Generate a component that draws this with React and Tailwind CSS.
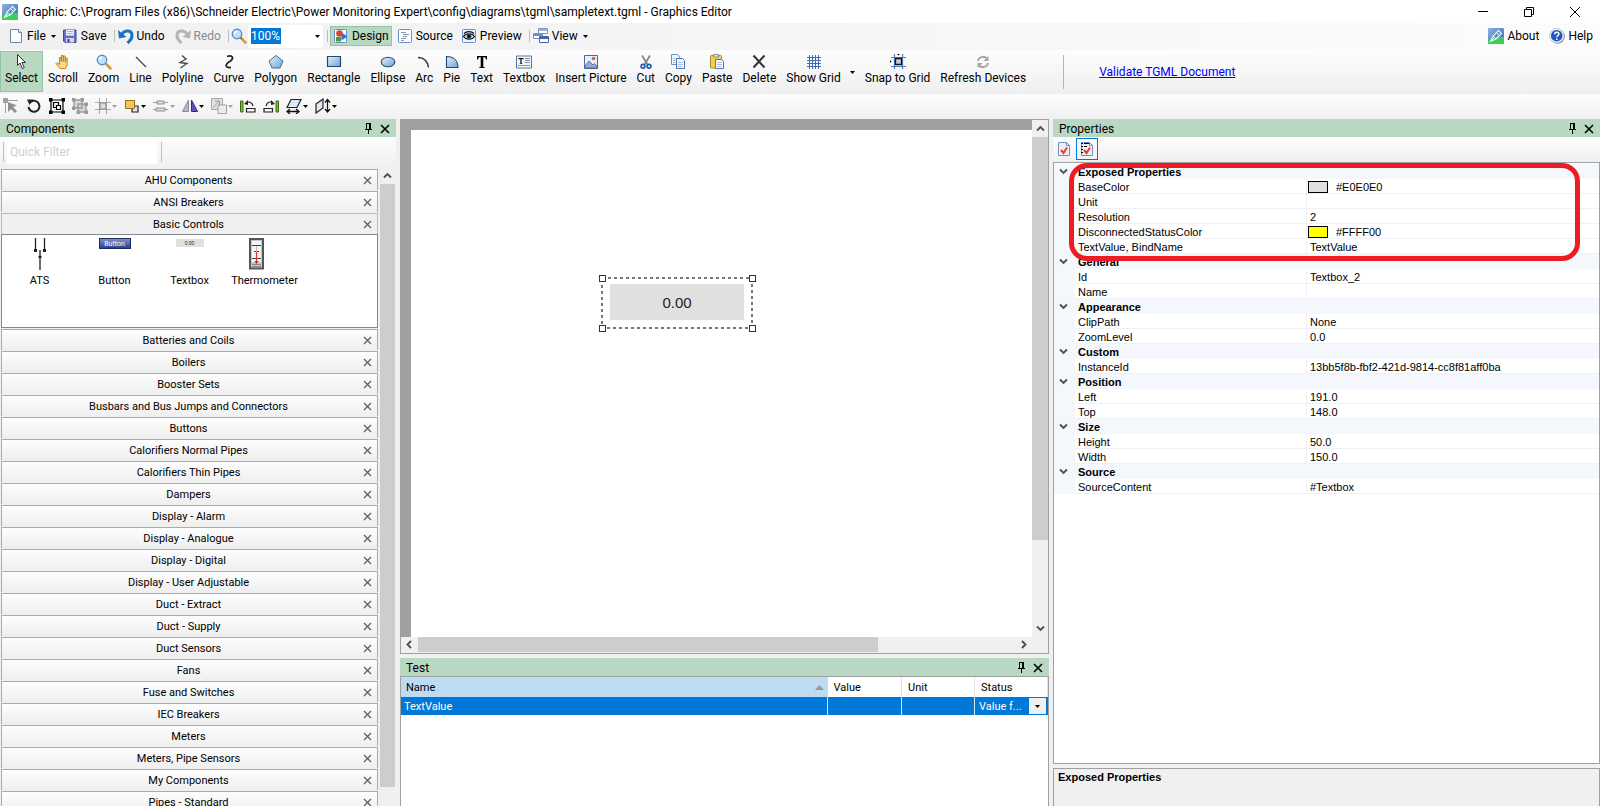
import React from 'react';

const Svg = ({ children, size = 16, className = '' }) => (
  <svg width={size} height={size} viewBox={`0 0 ${size} ${size}`} className={`shrink-0 ${className}`} fill="none" aria-hidden="true">
    {children}
  </svg>
);

// Small black drop-down triangle
const Caret = ({ className = 'text-black' }) => (
  <svg width="5" height="3" viewBox="0 0 5 3" className={`shrink-0 ${className}`} aria-hidden="true">
    <path d="M0 0h5L2.5 3z" fill="currentColor" />
  </svg>
);

const AppLogo = () => (
  <Svg>
    <defs>
      <linearGradient id="logoBlue" x1="0" y1="0" x2="1" y2="1">
        <stop offset="0" stopColor="#8fb0de" />
        <stop offset="1" stopColor="#2d6fb8" />
      </linearGradient>
    </defs>
    <rect width="16" height="16" rx="1" fill="url(#logoBlue)" />
    <path d="M0 12 6 9h10v6a1 1 0 0 1-1 1H1a1 1 0 0 1-1-1z" fill="#3dcd58" />
    <path d="M2.500 13.500 5 8l5.500-5.500 3 3L8 11z" stroke="#e8f4ff" strokeWidth="1.100" />
    <path d="M5 8l3 3M2.500 13.500 6.500 9.500M8.500 4.500l3 3" stroke="#e8f4ff" />
  </Svg>
);

const NewFile = () => (
  <Svg>
    <path d="M2.500 1.500h8l3 3v10h-11z" fill="#fbfdff" stroke="#6d86ad" />
    <path d="M10.500 1.500v3h3" fill="#dce8f8" stroke="#6d86ad" />
  </Svg>
);

const SaveIcon = () => (
  <Svg>
    <path d="M1.500 2h12.500v12.500H3L1.500 13z" fill="#6a6ec8" stroke="#45489c" />
    <path d="M4 2h8v5.500H4z" fill="#f2f4ff" />
    <path d="M5 3.500h6M5 5.500h6" stroke="#a7abcf" />
    <path d="M4 10h8v4.500H4z" fill="#d3d6e6" />
    <path d="M5.500 11h2v3.500h-2z" fill="#35388a" />
  </Svg>
);

const UndoIcon = () => (
  <Svg>
    <path d="M4 6c3-4.500 10-4 10 1.500 0 4-2.500 5.500-4.500 7.500" stroke="#1f6fc4" strokeWidth="3" />
    <path d="M0 2l1 8.500L8.500 9z" fill="#1f6fc4" />
  </Svg>
);

const RedoIcon = () => (
  <Svg>
    <path d="M12 6C9 1.500 2 2 2 7.500c0 4 2.500 5.500 4.500 7.500" stroke="#b4b4b4" strokeWidth="3" />
    <path d="M16 2l-1 8.500L7.500 9z" fill="#b4b4b4" />
  </Svg>
);

const Magnifier = () => (
  <Svg>
    <path d="M9.500 9.500l5 5" stroke="#d59a3c" strokeWidth="2.500" strokeLinecap="round" />
    <path d="M9 9l2 2" stroke="#6b6b6b" strokeWidth="1.500" />
    <circle cx="6" cy="6" r="4.700" fill="#bfe0fa" stroke="#5b8fc9" strokeWidth="1.400" />
    <path d="M3.500 6a2.500 2.500 0 0 1 2.500-2.500" stroke="#fff" strokeWidth="1.300" />
  </Svg>
);

const DesignIcon = () => (
  <Svg>
    <rect x="1.500" y="1.500" width="12" height="13" rx="1" fill="#f4f8ff" stroke="#6f8fc4" />
    <circle cx="6.500" cy="5.500" r="3.300" fill="#e2432c" />
    <path d="M3 9h5v4.500H3z" fill="#35a13f" />
    <path d="M8.500 4.500l6 4-6 4z" fill="#2f77d6" />
  </Svg>
);

const SourceIcon = () => (
  <Svg>
    <rect x="1.500" y="1.500" width="13" height="13" rx="1" fill="#fbfdff" stroke="#6f8fc4" />
    <path d="M4 4.500h5M6 6.500h6M6 8.500h4M4 10.500h5M4 12.500h3" stroke="#8796ad" />
  </Svg>
);

const PreviewIcon = () => (
  <Svg>
    <rect x="1.500" y="1.500" width="13" height="13" rx="1" fill="#eef4fc" stroke="#6f8fc4" />
    <path d="M2.500 8.500C5 5 11 5 13.500 8.500 11 12 5 12 2.500 8.500z" fill="#fff" stroke="#111" strokeWidth="1.200" />
    <circle cx="8" cy="8.300" r="2.500" fill="#24507f" />
    <circle cx="8" cy="8.300" r="1.200" fill="#000" />
    <path d="M3 5.500C5.500 3 10.500 3 13 5.500" stroke="#111" strokeWidth="1.200" />
  </Svg>
);

const ViewIcon = () => (
  <Svg>
    <path d="M5.500.5h9v5h-9z" fill="#fff" stroke="#7f93b8" />
    <path d="M5.500 1h9v2h-9z" fill="#9db3d8" />
    <path d="M.5 5.500h9v5h-9z" fill="#fff" stroke="#7f93b8" />
    <path d="M.5 6h9v2h-9z" fill="#6d8fcb" />
    <path d="M6.500 8.500h9v6h-9z" fill="#fff" stroke="#4a66a0" />
    <path d="M6.500 9h9v2h-9z" fill="#3d66b4" />
  </Svg>
);

const HelpIcon = () => (
  <Svg>
    <circle cx="8.500" cy="8.500" r="7.300" fill="#8b8f98" />
    <circle cx="7.700" cy="7.700" r="7.200" fill="#f3f6fb" stroke="#b6bccb" strokeWidth=".8" />
    <circle cx="7.700" cy="7.700" r="5.800" fill="#2458c5" />
    <path d="M5.700 6.200c0-2.800 4.200-2.600 4.200-.2 0 1.500-2.100 1.600-2.100 3.300M7.800 10.500v1.500" stroke="#fff" strokeWidth="1.500" />
  </Svg>
);

const tools = [
  { label: 'Select', active: true, icon: <path d="M4.500.5v11l2.500-2.500 2.300 5.500 2-.9L9 8.500h3.500z" fill="#fff" stroke="#333" /> },
  { label: 'Scroll', icon: <path d="M5 14.500 1 9.500 2 8.500l2.500 2V3.500h1.500v4h.5V1.500h1.700v6h.4v-5.500h1.600v6h.5V4h1.500v7L10.500 14.500z" fill="#fbd98b" stroke="#b57c1c" strokeWidth=".9" /> },
  { label: 'Zoom', icon: (
    <>
      <path d="M9.500 9.500l5 5" stroke="#d59a3c" strokeWidth="2.500" strokeLinecap="round" />
      <circle cx="6" cy="6" r="4.700" fill="#bfe0fa" stroke="#5b8fc9" strokeWidth="1.400" />
      <path d="M3.500 6a2.500 2.500 0 0 1 2.500-2.500" stroke="#fff" strokeWidth="1.300" />
    </>
  ) },
  { label: 'Line', icon: <path d="M3 3l10 10" stroke="#444" strokeWidth="1.300" /> },
  { label: 'Polyline', icon: <path d="M7 1.500 11 5 5 8.500l7 1L5.500 14" stroke="#444" strokeWidth="1.300" /> },
  { label: 'Curve', icon: <path d="M6 2.500c6-2 7 2 3.500 4.500-6 3.500-5.500 7 .5 6.500" stroke="#222" strokeWidth="1.800" /> },
  { label: 'Polygon', icon: <path d="M8 1.500 15 7l-3 7H4L1 7z" fill="url(#shapeBlue)" stroke="#3f6a9c" /> },
  { label: 'Rectangle', icon: <path d="M1.500 2.500h13v10h-13z" fill="url(#shapeBlue)" stroke="#27476d" strokeWidth="1.200" /> },
  { label: 'Ellipse', icon: <ellipse cx="8" cy="8" rx="6.800" ry="4.800" fill="url(#shapeBlue)" stroke="#27476d" strokeWidth="1.100" /> },
  { label: 'Arc', icon: <path d="M2 3.500c6 0 9.500 3.500 10.500 10" stroke="#333" strokeWidth="1.500" /> },
  { label: 'Pie', icon: <path d="M2.500 2.500C10 2.500 14 7 14 13.500H2.500z" fill="url(#shapeBlue)" stroke="#27476d" strokeWidth="1.100" /> },
  { label: 'Text', icon: <path d="M3 5.500V2h10v3.500h-1l-.7-2.200H9.300V13l1.700.4v.6H5v-.6l1.700-.4V3.300h-2L4 5.500z" fill="#000" /> },
  { label: 'Textbox', icon: (
    <>
      <path d="M.5 2h15v12H.5z" fill="#f7faff" stroke="#56749f" />
      <path d="M2.500 4h5v1.500h-.7V5H5.600v4h.7v.8H3.700V9h.7V5H3.200v.5h-.7z" fill="#000" />
      <path d="M9 4.500h5M9 6.500h5M9 8.500h5M2 11.500h12" stroke="#7f8fa8" />
    </>
  ) },
  { label: 'Insert Picture', icon: (
    <>
      <path d="M1.500 1.500h13v13h-13z" fill="#e6f0fc" stroke="#4b6797" />
      <circle cx="10.500" cy="4.500" r="1.800" fill="#e2622c" />
      <path d="M2 12l4-5 4 4 1.500-1.500L14 12v2H2z" fill="#93abd2" stroke="#4b5f8c" strokeWidth=".8" />
    </>
  ) },
  { label: 'Cut', icon: (
    <>
      <path d="M4 1.500l5.500 9M12 1.500 6.500 10.500" stroke="#7f8690" strokeWidth="1.700" />
      <circle cx="5" cy="12.300" r="1.900" stroke="#1d5fb5" strokeWidth="1.700" />
      <circle cx="11" cy="12.300" r="1.900" stroke="#1d5fb5" strokeWidth="1.700" />
    </>
  ) },
  { label: 'Copy', icon: (
    <>
      <path d="M1.500.5h6l2 2v8h-8z" fill="#eef5fe" stroke="#6b8dc6" />
      <path d="M6.500 4.500h6l2 2v8h-8z" fill="#f5f9ff" stroke="#4f77b8" />
      <path d="M3 4.500h2.500M3 6.500h2.500M3 8.500h2.500M8 8.500h5M8 10.500h5M8 12.500h4" stroke="#a7c3ea" />
    </>
  ) },
  { label: 'Paste', icon: (
    <>
      <rect x="1.500" y="1.500" width="11" height="12.500" rx="1" fill="#f3cf56" stroke="#a98a2a" />
      <path d="M4.500.5h5v2.500h-5z" fill="#d9dde4" stroke="#7b808a" strokeWidth=".8" />
      <path d="M6.500 5.500h6l2 2v7h-8z" fill="#f5f9ff" stroke="#4f77b8" />
      <path d="M8 8.500h5M8 10.500h5M8 12.500h4" stroke="#a7c3ea" />
    </>
  ) },
  { label: 'Delete', icon: <path d="M2.500 1.500l11 12M13.500 1.500l-11 12" stroke="#333" strokeWidth="2" /> },
  { label: 'Show Grid', caret: true, icon: <path d="M3.500 1v14M6.500 1v14M9.500 1v14M12.500 1v14M1 3.500h14M1 6.500h14M1 9.500h14M1 12.500h14" stroke="#3a6bb5" /> },
  { label: 'Snap to Grid', icon: (
    <>
      <path d="M4.500 0v15M12.500 0v15M1 3.500h15M1 12.500h15" stroke="#4b7cc4" strokeWidth="1.200" />
      <path d="M5.500 4.500h6v6h-6z" fill="#c5cbd6" stroke="#111" strokeWidth="1.300" />
      <path d="M0 6v3l1.500-1.500zM7 0h3L8.500 1.500z" fill="#111" />
    </>
  ) },
  { label: 'Refresh Devices', icon: (
    <>
      <path d="M3 7c.5-4 6-5.500 9-2.500M13 9c-.5 4-6 5.500-9 2.500" stroke="#a5a5a5" strokeWidth="2" />
      <path d="M13.500 2v5h-5zM2.500 14V9h5z" fill="#a5a5a5" />
    </>
  ) },
];

const arrangeTools = [
  { name: 'Edit points', icon: (
    <>
      <path d="M2.500 2v13M2 2.500h13" stroke="#a0a0a0" />
      <path d="M0 0h5v5H0z" fill="#a0a0a0" />
      <path d="M5 4v10l3-3 4 4 2-2-4-4 4-1.500z" fill="#8f8f8f" />
    </>
  ) },
  { name: 'Rotate', icon: (
    <>
      <path d="M4.500 4A5.500 5.500 0 1 1 2.500 9" stroke="#222" strokeWidth="2" />
      <path d="M1 1.500h6.500L3.500 7z" fill="#222" />
    </>
  ) },
  { name: 'Group', icon: (
    <>
      <path d="M2 2h12v12H2z" stroke="#000" strokeWidth="1.200" />
      <path d="M4.500 4.500h5v5h-5z" fill="#eef1f6" stroke="#000" strokeWidth="1.200" />
      <path d="M7.500 7.500h4v4h-4z" fill="#fff" stroke="#000" strokeWidth="1.200" />
      <path d="M0 0h3.500v3.500H0zM12.500 0H16v3.500h-3.500zM0 12.500h3.500V16H0zM12.500 12.500H16V16h-3.500z" fill="#000" />
    </>
  ) },
  { name: 'Ungroup', icon: (
    <>
      <path d="M2 2h8v8H2zM6 6h8v8H6z" fill="#d8d8d8" stroke="#9a9a9a" strokeWidth="1.400" />
      <path d="M0 0h3.500v3.500H0zM8.500 0H12v3.500H8.500zM0 8.500h3.500V12H0zM12.500 4.500H16V8h-3.500zM4.500 12.500H8V16H4.500zM12.500 12.500H16V16h-3.500z" fill="#9a9a9a" />
    </>
  ) },
  { name: 'Align', caret: 'off', icon: (
    <>
      <path d="M4.500 0v16M11.500 0v16M0 4.500h16M0 11.500h16" stroke="#a8a8a8" />
      <path d="M5 5h6v6H5z" fill="#ddd" stroke="#8d8d8d" strokeWidth="1.200" />
    </>
  ) },
  { name: 'Order', caret: 'on', icon: (
    <>
      <path d="M8 8h6v6H8z" fill="#dce9f8" stroke="#222" strokeWidth="1.200" />
      <path d="M1.500 2.500h9v8h-9z" fill="#f4c55c" stroke="#9a6f14" />
    </>
  ) },
  { name: 'Distribute', caret: 'off', icon: (
    <>
      <path d="M0 4.500h15M0 11.500h15" stroke="#a0a0a0" />
      <path d="M4 3h7v3H4zM3 10h9v3H3z" fill="#ddd" stroke="#8d8d8d" />
    </>
  ) },
  { name: 'Flip', caret: 'on', icon: (
    <>
      <path d="M6.500 2v11.500H.5z" fill="#b9b4c8" stroke="#8f8aa3" />
      <path d="M9.500 2v11.500h6z" fill="#6a4fb5" stroke="#3b2a75" />
    </>
  ) },
  { name: 'Combine', caret: 'off', icon: (
    <>
      <path d="M.5.500h11v11H.5z" fill="#e2e2e2" stroke="#a8a8a8" />
      <path d="M7 7h8.500v8.500H7z" fill="#ececec" stroke="#a0a0a0" />
      <path d="M2 10 8 3M4 3h4.500v4" stroke="#9a9a9a" />
    </>
  ) },
  { name: 'Rotate left', icon: (
    <>
      <path d="M.5 3h2.500v11H.5z" fill="#79b83a" stroke="#3d6b14" />
      <path d="M6.500 10.500h8.500v3.500H6.500zM6 5c3-2 6-1 7 3" stroke="#222" strokeWidth="1.200" />
      <path d="M4 6l4-4v5z" fill="#222" />
    </>
  ) },
  { name: 'Rotate right', icon: (
    <>
      <path d="M13 3h2.500v11H13z" fill="#79b83a" stroke="#3d6b14" />
      <path d="M1 10.500h8.500v3.500H1zM10 5C7 3 4 4 3 8" stroke="#222" strokeWidth="1.200" />
      <path d="M12 6 8 2v5z" fill="#222" />
    </>
  ) },
  { name: 'Skew horizontally', caret: 'on', icon: (
    <>
      <path d="M5 1.500h10l-4 8H1z" fill="#dce9f8" stroke="#222" strokeWidth="1.200" />
      <path d="M2 13.500h10M4 11l-3 2.500L4 16M10 11l3 2.500L10 16" stroke="#111" strokeWidth="1.300" />
    </>
  ) },
  { name: 'Skew vertically', caret: 'on', icon: (
    <>
      <path d="M1 6l7-5v9l-7 5z" fill="#dce9f8" stroke="#222" strokeWidth="1.200" />
      <path d="M12.500 2v11M10 4.500 12.500 1.500l2.500 3M10 11l2.500 3 2.500-3" stroke="#111" strokeWidth="1.300" />
    </>
  ) },
];

const categoriesAbove = ['AHU Components', 'ANSI Breakers'];

const categoriesBelow = [
  'Batteries and Coils',
  'Boilers',
  'Booster Sets',
  'Busbars and Bus Jumps and Connectors',
  'Buttons',
  'Calorifiers Normal Pipes',
  'Calorifiers Thin Pipes',
  'Dampers',
  'Display - Alarm',
  'Display - Analogue',
  'Display - Digital',
  'Display - User Adjustable',
  'Duct - Extract',
  'Duct - Supply',
  'Duct Sensors',
  'Fans',
  'Fuse and Switches',
  'IEC Breakers',
  'Meters',
  'Meters, Pipe Sensors',
  'My Components',
  'Pipes - Standard',
];

const propertyGroups = [
  { name: 'Exposed Properties', rows: [
    ['BaseColor', '#E0E0E0', 'bg-[#e0e0e0]'],
    ['Unit', ''],
    ['Resolution', '2'],
    ['DisconnectedStatusColor', '#FFFF00', 'bg-[#ffff00]'],
    ['TextValue, BindName', 'TextValue'],
  ] },
  { name: 'General', rows: [['Id', 'Textbox_2'], ['Name', '']] },
  { name: 'Appearance', rows: [['ClipPath', 'None'], ['ZoomLevel', '0.0']] },
  { name: 'Custom', rows: [['InstanceId', '13bb5f8b-fbf2-421d-9814-cc8f81aff0ba']] },
  { name: 'Position', rows: [['Left', '191.0'], ['Top', '148.0']] },
  { name: 'Size', rows: [['Height', '50.0'], ['Width', '150.0']] },
  { name: 'Source', rows: [['SourceContent', '#Textbox']] },
];

const Separator = () => <div className="h-3 w-px shrink-0 bg-[#bdbdbd]" />;

const MenuButton = ({ icon, label, caret, active, disabled }) => (
  <button
    disabled={disabled}
    className={`flex h-5 shrink-0 items-center gap-[3px] border px-[2px] ${active ? 'border-[#8fc5a4] bg-[#b9d8c2]' : 'border-transparent'} ${disabled ? 'text-[#8a8a8a]' : ''}`}
  >
    {icon}
    <span>{label}</span>
    {caret && <Caret className="ml-[2px] text-black" />}
  </button>
);

const PanelHeader = ({ title }) => (
  <div className="flex h-[18px] shrink-0 items-center bg-[#b9d8c2] px-[6px] pt-px">
    <h2 className="flex-1">{title}</h2>
    <button aria-label={`Pin ${title}`} className="mr-[7px]">
      <svg width="9" height="11" viewBox="0 0 9 11" shapeRendering="crispEdges" aria-hidden="true">
        <path d="M2 0h5v1H2zM2 0h1v6H2zM5 0h2v6H5zM1 6h7v1H1zM4 7h1v4H4z" fill="#000" />
      </svg>
    </button>
    <button aria-label={`Close ${title}`}>
      <svg width="10" height="10" viewBox="0 0 10 10" aria-hidden="true">
        <path d="M1 1l8 8M9 1l-8 8" stroke="#000" strokeWidth="1.600" />
      </svg>
    </button>
  </div>
);

const CategoryHeader = ({ name, open }) => (
  <div className="h-[22px]">
    <div className={`flex h-[21px] items-center border border-b-0 pr-[5px] ${open ? 'border-[#b8b8b8] bg-[#f0f0f0]' : 'border-[#7eb6e4] bg-linear-to-b from-[#fdfdfd] to-[#efefef]'}`}>
      <button className="flex-1 pl-3 pt-px text-center">{name}</button>
      <button aria-label={`Remove ${name}`}>
        <svg width="9" height="9" viewBox="0 0 9 9" aria-hidden="true">
          <path d="M1 1l7 7M8 1L1 8" stroke="#606060" strokeWidth="1.300" />
        </svg>
      </button>
    </div>
  </div>
);

const Chevron = ({ dir }) => {
  const paths = {
    up: 'M1 6.500 4.500 3 8 6.500',
    down: 'M1 2.500 4.500 6 8 2.500',
    left: 'M6 1 2.500 4.500 6 8',
    right: 'M3 1l3.500 3.500L3 8',
  };
  return (
    <svg width="9" height="9" viewBox="0 0 9 9" fill="none" aria-hidden="true">
      <path d={paths[dir]} stroke="#505050" strokeWidth="1.900" />
    </svg>
  );
};

const CheckPage = ({ list }) => (
  <Svg>
    <path d="M2.500 1.500h8l3 3v10h-11z" fill="#e9effb" stroke="#7390c0" />
    <path d="M10.500 1.500v3h3" stroke="#7390c0" />
    <path d="M5 9l2.500 3L11 6.500" stroke="#e8401c" strokeWidth="2" />
    {list && <path d="M2 2.500h2M5 2.500h5M2 5.500h2M5 5.500h3M2 8.500h2M2 11.500h2" stroke="#000" strokeWidth="1.200" />}
  </Svg>
);

const ComponentItem = ({ label, children }) => (
  <button className="flex w-[75px] flex-col items-center">
    <span className="flex h-8 items-start">{children}</span>
    <span className="mt-[3px] leading-4">{label}</span>
  </button>
);

const ComponentsPanel = () => (
  <aside className="flex w-[396px] shrink-0 flex-col overflow-hidden">
    <PanelHeader title="Components" />
    <div className="flex h-[30px] shrink-0 items-center bg-linear-to-b from-[#fdfdfd] to-[#f0f0f0] pl-[3px]">
      <div className="mr-[3px] h-5 w-px bg-[#bdbdbd]" />
      <input aria-label="Quick Filter" placeholder="Quick Filter" className="h-6 w-[150px] bg-white px-[3px] outline-none placeholder:text-[#cfcfcf]" />
      <div className="ml-1 h-5 w-px bg-[#bdbdbd]" />
    </div>
    <div className="flex min-h-0 flex-1">
      <div className="flex-1 overflow-hidden pl-px pt-[2px] text-[11px]">
        {categoriesAbove.map((name) => <CategoryHeader key={name} name={name} />)}
        <CategoryHeader name="Basic Controls" open />
        <div className="-mt-px mb-px flex h-[94px] items-start border border-[#828790] bg-white pt-[3px]">
          <ComponentItem label="ATS">
            <svg width="14" height="32" viewBox="0 0 14 32" fill="none" aria-hidden="true">
              <path d="M2.500 0v13M11.500 0v13M7 12v20" stroke="#222" strokeWidth="1.300" />
              <path d="M1 11h3v3H1zM10 11h3v3h-3zM5.500 18h3v2h-3z" fill="#222" />
            </svg>
          </ComponentItem>
          <ComponentItem label="Button">
            <span className="flex h-[11px] w-8 items-center justify-center border border-[#1c2a5c] bg-linear-to-b from-[#7d90c8] to-[#2a4194] text-[7px] text-white">Button</span>
          </ComponentItem>
          <ComponentItem label="Textbox">
            <span className="mt-px flex h-2 w-7 items-center justify-center bg-[#e0e0e0] text-[5px] text-[#333]">0.00</span>
          </ComponentItem>
          <ComponentItem label="Thermometer">
            <svg width="16" height="32" viewBox="0 0 16 32" fill="none" className="mr-4" aria-hidden="true">
              <path d="M1 1h13v29.500H1z" fill="#c8c8c8" stroke="#555" strokeWidth="2" />
              <path d="M3 3h9v21H3z" fill="#f4f4f4" />
              <path d="M3 7.500h9M5 13.500h5M3 20.500h9" stroke="#444" />
              <path d="M7.500 8v6" stroke="#bbb" />
              <path d="M7.500 14v10" stroke="#e03030" strokeWidth="1.200" />
              <path d="M5.500 23h4l-2 3z" fill="#d02020" />
              <path d="M3 26.500h9M3 28.500h9" stroke="#888" />
            </svg>
          </ComponentItem>
        </div>
        {categoriesBelow.map((name) => <CategoryHeader key={name} name={name} />)}
      </div>
      <div className="ml-[2px] mr-px flex w-[15px] flex-col">
        <button aria-label="Scroll up" className="flex h-[17px] items-center justify-center"><Chevron dir="up" /></button>
        <div className="mb-[19px] flex-1 bg-[#cdcdcd]" />
      </div>
    </div>
  </aside>
);

const Handle = ({ className }) => (
  <span className={`absolute size-[7px] border border-[#333] bg-white ${className}`} />
);

const CanvasPanel = () => (
  <section className="flex min-h-0 flex-1 flex-col border border-[#a0a0a0] bg-[#f0f0f0]">
    <div className="flex min-h-0 flex-1">
      <div className="flex flex-1 bg-[#a0a0a0] pl-[10px] pt-[10px]">
        <div className="relative flex-1 bg-white">
          {/* Selected textbox with its resize handles */}
          <div className="absolute left-[191px] top-[148px] h-[50px] w-[150px] px-2 pb-2 pt-[6px]">
            <svg className="absolute inset-0 size-full overflow-visible" fill="none" aria-hidden="true">
              <rect width="150" height="50" stroke="#777" strokeWidth="2" strokeDasharray="3 3" />
            </svg>
            <div className="flex h-full items-center justify-center bg-[#e0e0e0] pt-[2px] font-['Liberation_Sans',sans-serif] text-[15px] text-[#222]">0.00</div>
            <Handle className="-left-[3px] -top-[3px]" />
            <Handle className="-right-[4px] -top-[3px]" />
            <Handle className="-bottom-[4px] -left-[3px]" />
            <Handle className="-bottom-[4px] -right-[4px]" />
          </div>
        </div>
      </div>
      <div className="flex w-4 flex-col">
        <button aria-label="Scroll up" className="flex h-[17px] items-center justify-center"><Chevron dir="up" /></button>
        <div className="flex flex-1 flex-col">
          <div className="flex-5 bg-[#cdcdcd]" />
          <div className="flex-1" />
        </div>
        <button aria-label="Scroll down" className="flex h-[17px] items-center justify-center"><Chevron dir="down" /></button>
      </div>
    </div>
    <div className="flex h-4 pb-px pr-4">
      <button aria-label="Scroll left" className="flex w-[17px] items-center justify-center"><Chevron dir="left" /></button>
      <div className="flex flex-1">
        <div className="w-[77%] bg-[#cdcdcd]" />
      </div>
      <button aria-label="Scroll right" className="flex w-[17px] items-center justify-center"><Chevron dir="right" /></button>
    </div>
  </section>
);

const TestPanel = () => (
  <section className="flex h-[148px] shrink-0 flex-col">
    <PanelHeader title="Test" />
    <div className="flex-1 border border-b-0 border-[#a0a0a0] bg-white">
      <table className="w-full table-fixed border-collapse text-left text-[11px]">
        <colgroup>
          <col />
          <col className="w-[74px]" />
          <col className="w-[73px]" />
          <col className="w-[73px]" />
        </colgroup>
        <thead>
          <tr className="h-5">
            <th className="bg-[#bcdcf4] p-0 pl-[5px] pr-1 pt-px font-normal">
              <span className="flex items-center justify-between">
                Name
                <svg width="9" height="5" viewBox="0 0 9 5" aria-hidden="true"><path d="M4.500 0 9 5H0z" fill="#9a9a9a" /></svg>
              </span>
            </th>
            <th className="border-r border-[#e2e2e2] p-0 pl-[6px] pt-px font-normal">Value</th>
            <th className="border-r border-[#e2e2e2] p-0 pl-[6px] pt-px font-normal">Unit</th>
            <th className="border-r border-[#e2e2e2] p-0 pl-[6px] pt-px font-normal">Status</th>
          </tr>
        </thead>
        <tbody>
          <tr className="h-[18px] bg-[#0078d7] text-white">
            <td className="border-r border-[#d8e6f2] p-0 pl-[3px] pt-px">TextValue</td>
            <td className="border-r border-[#d8e6f2] p-0" />
            <td className="border-r border-[#d8e6f2] p-0" />
            <td className="relative p-0">
              <select aria-label="Status" className="block h-[18px] w-full appearance-none bg-transparent pl-1 pt-px outline-none">
                <option>Value f...</option>
              </select>
              <span className="pointer-events-none absolute right-[2px] top-px flex h-4 w-[17px] items-center justify-center bg-[#f0f0f0]"><Caret /></span>
            </td>
          </tr>
        </tbody>
      </table>
    </div>
  </section>
);

const PropertiesPanel = () => (
  <aside className="flex w-[547px] shrink-0 flex-col">
    <PanelHeader title="Properties" />
    <div className="flex h-[25px] shrink-0 items-start gap-px bg-linear-to-b from-[#fdfdfd] to-[#f0f0f0] pt-px">
      <button aria-label="Show all properties" className="flex h-[22px] w-[22px] items-center justify-center"><CheckPage /></button>
      <button aria-label="Show exposed properties" className="flex h-[22px] w-[22px] items-center justify-center border border-[#0078d7]"><CheckPage list /></button>
    </div>
    <div className="relative flex-1 border border-[#a0a0a0] bg-white pt-px font-['Liberation_Sans',sans-serif] text-[11px]">
      <table className="w-full table-fixed border-separate border-spacing-0 text-left leading-[14px]">
        <colgroup>
          <col className="w-[21px]" />
          <col className="w-[232px]" />
          <col />
        </colgroup>
        {propertyGroups.map((group) => (
          <tbody key={group.name}>
            <tr className="h-[15px] bg-[#f4f7fc]">
              <td className="p-0">
                <button aria-label={`Collapse ${group.name}`} className="ml-[5px] block"><Chevron dir="down" /></button>
              </td>
              <th colSpan={2} className="p-0 pl-[3px] font-bold">{group.name}</th>
            </tr>
            {group.rows.map(([name, value, swatch]) => (
              <tr key={name} className="h-[15px] leading-[12px]">
                <td className="bg-[#f4f7fc] p-0" />
                <td className="border-b border-r border-[#eef1f6] p-0 pl-[3px] pt-[2px]">{name}</td>
                <td className="border-b border-[#eef1f6] p-0 pl-[3px] pt-[2px]">
                  {swatch ? (
                    <span className="flex h-3 items-center gap-2">
                      <span className={`-ml-[2px] h-3 w-5 border border-black ${swatch}`} />
                      {value}
                    </span>
                  ) : value}
                </td>
              </tr>
            ))}
          </tbody>
        ))}
      </table>
      {/* Highlight around the exposed properties */}
      <div className="pointer-events-none absolute left-[15px] right-[19px] top-0 h-[98px] rounded-[18px] border-[5px] border-[#ed1c24]" />
    </div>
    <div className="mt-1 h-[38px] shrink-0 border border-b-0 border-[#a0a0a0] px-1 py-px font-['Liberation_Sans',sans-serif] text-[11px] font-bold leading-[14px]">
      Exposed Properties
    </div>
  </aside>
);

// Shared gradient for the shape tools
const ShapeGradient = () => (
  <svg width="0" height="0" className="absolute" aria-hidden="true">
    <defs>
      <linearGradient id="shapeBlue" x1="0" y1="0" x2="1" y2="1">
        <stop offset="0" stopColor="#e3f1fd" />
        <stop offset="1" stopColor="#6fa3d6" />
      </linearGradient>
    </defs>
  </svg>
);

const App = () => (
  <div className="flex h-screen w-full flex-col overflow-hidden bg-[#f0f0f0] font-['Roboto',sans-serif] text-[12px] leading-4 text-black">
    <ShapeGradient />
    <header className="flex h-[23px] shrink-0 items-center bg-white px-[2px]">
      <AppLogo />
      <h1 className="ml-[5px] flex-1">Graphic: C:\Program Files (x86)\Schneider Electric\Power Monitoring Expert\config\diagrams\tgml\sampletext.tgml - Graphics Editor</h1>
      <button aria-label="Minimize" className="flex w-[46px] justify-center">
        <svg width="10" height="10" viewBox="0 0 10 10" aria-hidden="true"><path d="M0 4.500h10" stroke="#000" /></svg>
      </button>
      <button aria-label="Restore" className="flex w-[46px] justify-center">
        <svg width="10" height="10" viewBox="0 0 10 10" fill="none" aria-hidden="true"><path d="M.5 2.500h7v7h-7zM2.500 2.500v-2h7v7h-2" stroke="#000" /></svg>
      </button>
      <button aria-label="Close" className="flex w-[46px] justify-center">
        <svg width="10" height="10" viewBox="0 0 10 10" aria-hidden="true"><path d="M0 0l10 10M10 0L0 10" stroke="#000" /></svg>
      </button>
    </header>

    <nav className="flex h-[27px] shrink-0 items-center bg-linear-to-r from-[#f0f0f0] to-[#fcfcfc] pb-px pl-[5px] pr-1">
      <MenuButton icon={<NewFile />} label="File" caret />
      <div className="mr-1 flex"><MenuButton icon={<SaveIcon />} label="Save" /></div>
      <Separator />
      <div className="mr-1 flex gap-1">
        <MenuButton icon={<UndoIcon />} label="Undo" />
        <MenuButton icon={<RedoIcon />} label="Redo" disabled />
      </div>
      <Separator />
      <label htmlFor="zoom-level" className="ml-[2px]"><Magnifier /></label>
      <div className="ml-px mr-1 flex h-[23px] w-[75px] items-center justify-between bg-white px-[3px]">
        <input id="zoom-level" aria-label="Zoom level" defaultValue="100%" className="w-[30px] bg-[#0078d7] text-white outline-none" />
        <button aria-label="Zoom levels"><Caret /></button>
      </div>
      <Separator />
      <div className="ml-[2px] mr-1 flex gap-[2px]">
        <MenuButton icon={<DesignIcon />} label="Design" active />
        <MenuButton icon={<SourceIcon />} label="Source" />
        <MenuButton icon={<PreviewIcon />} label="Preview" />
      </div>
      <Separator />
      <MenuButton icon={<ViewIcon />} label="View" caret />
      <div className="ml-auto flex gap-1">
        <MenuButton icon={<AppLogo />} label="About" />
        <MenuButton icon={<HelpIcon />} label="Help" />
      </div>
    </nav>

    <div className="flex h-[44px] shrink-0 items-start bg-linear-to-b from-[#fdfdfd] to-[#efefef]">
      {tools.map(({ label, icon, active, caret }) => (
        <React.Fragment key={label}>
          <button className={`mt-px flex h-[41px] shrink-0 flex-col items-center border px-1 pt-[2px] ${active ? 'border-[#8fc5a4] bg-[#b9d8c2]' : 'border-transparent'}`}>
            <Svg>{icon}</Svg>
            <span>{label}</span>
          </button>
          {caret && <button aria-label="Grid options" className="flex h-[44px] w-[14px] items-center justify-center"><Caret /></button>}
        </React.Fragment>
      ))}
      <div className="ml-8 mt-[5px] h-[34px] w-px bg-[#b5b5b5]" />
      <a href="#validate" className="ml-[35px] mt-[14px] text-[#0000ff] underline">Validate TGML Document</a>
    </div>

    <div className="flex h-[25px] shrink-0 items-center gap-[7px] bg-linear-to-b from-[#fdfdfd] to-[#f0f0f0] pb-px pl-[3px]">
      {arrangeTools.map(({ name, icon, caret }) => (
        <button key={name} aria-label={name} className="flex shrink-0 items-center gap-px">
          <Svg>{icon}</Svg>
          {caret && <Caret className={caret === 'on' ? 'text-black' : 'text-[#a0a0a0]'} />}
        </button>
      ))}
    </div>

    <main className="flex min-h-0 flex-1 gap-1">
      <ComponentsPanel />
      <div className="flex min-w-0 flex-1 flex-col gap-1">
        <CanvasPanel />
        <TestPanel />
      </div>
      <PropertiesPanel />
    </main>
  </div>
);

export default App;
